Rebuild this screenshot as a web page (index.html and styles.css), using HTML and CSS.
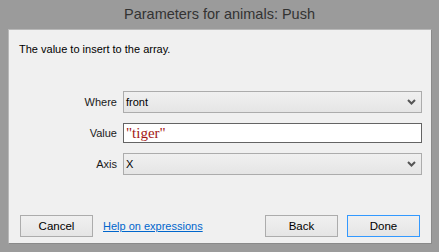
FILE: index.html
```html
<!DOCTYPE html>
<html>
<head>
<meta charset="utf-8">
<link rel="stylesheet" href="styles.css">
</head>
<body>
<div class="window">
  <div class="titlebar">Parameters for animals: Push</div>
  <div class="panel">
    <p class="desc">The value to insert to the array.</p>
    <div class="form">
      <label class="lbl">Where</label>
      <div class="select sel-where"><span>front</span>
        <svg class="chev" width="9" height="6" viewBox="0 0 9 6"><path d="M1 1 L4.5 4.5 L8 1" fill="none" stroke="#555" stroke-width="2"/></svg>
      </div>
      <label class="lbl">Value</label>
      <div class="input"><span class="str">"tiger"</span></div>
      <label class="lbl">Axis</label>
      <div class="select sel-axis"><span>X</span>
        <svg class="chev" width="9" height="6" viewBox="0 0 9 6"><path d="M1 1 L4.5 4.5 L8 1" fill="none" stroke="#555" stroke-width="2"/></svg>
      </div>
    </div>
    <div class="footer">
      <button class="btn">Cancel</button>
      <a class="link" href="#">Help on expressions</a>
      <div class="spacer"></div>
      <button class="btn">Back</button>
      <button class="btn primary">Done</button>
    </div>
  </div>
</div>
</body>
</html>
```
FILE: styles.css
```css
html, body {
  margin: 0;
  padding: 0;
}
body {
  width: 439px;
  height: 252px;
  background: #9b9b9b;
  font-family: "Liberation Sans", Arial, sans-serif;
  font-size: 11px;
  color: #000;
  overflow: hidden;
}
.window {
  display: flex;
  flex-direction: column;
  height: 252px;
}
.titlebar {
  height: 29px;
  line-height: 29px;
  text-align: center;
  font-size: 14.5px;
  color: #333;
}
.panel {
  margin: 0 7px 0 8px;
  height: 215px;
  box-sizing: border-box;
  background: #f0f0f0;
  border: 1px solid #b8b8b8;
  border-right-color: #8a8a8a;
  border-bottom-color: #8a8a8a;
  display: flex;
  flex-direction: column;
}
.desc {
  margin: 12px 0 0 10px;
  line-height: 15px;
}
.form {
  margin-top: 34px;
  display: grid;
  grid-template-columns: 108px 299px;
  column-gap: 6px;
  row-gap: 10px;
  align-items: center;
}
.lbl {
  text-align: right;
  color: #1a1a1a;
}
.select {
  height: 22px;
  box-sizing: border-box;
  border: 1px solid #acacac;
  background: linear-gradient(#f0f0f0, #e5e5e5);
  display: flex;
  align-items: center;
  padding: 0 0 0 2px;
  position: relative;
}
.select span {
  flex: 1;
}
.chev {
  margin-right: 5px;
}
.input {
  height: 20px;
  box-sizing: border-box;
  border: 1px solid #646464;
  background: #fff;
  display: flex;
  align-items: center;
  padding-left: 2px;
}
.str {
  font-family: "Liberation Serif", "Times New Roman", serif;
  font-size: 15px;
  color: #a31515;
}
.footer {
  margin-top: auto;
  margin-bottom: 6px;
  display: flex;
  align-items: center;
  padding: 0 11px 0 11px;
}
.btn {
  width: 73px;
  height: 22px;
  box-sizing: border-box;
  border: 1px solid #acacac;
  background: linear-gradient(#f0f0f0, #e5e5e5);
  font-family: "Liberation Sans", Arial, sans-serif;
  font-size: 11.5px;
  color: #000;
  padding: 0;
}
.btn.primary {
  border-color: #3399ff;
  margin-left: 9px;
}
.link {
  margin-left: 10px;
  color: #0066cc;
  text-decoration: underline;
}
.spacer {
  flex: 1;
}
```
